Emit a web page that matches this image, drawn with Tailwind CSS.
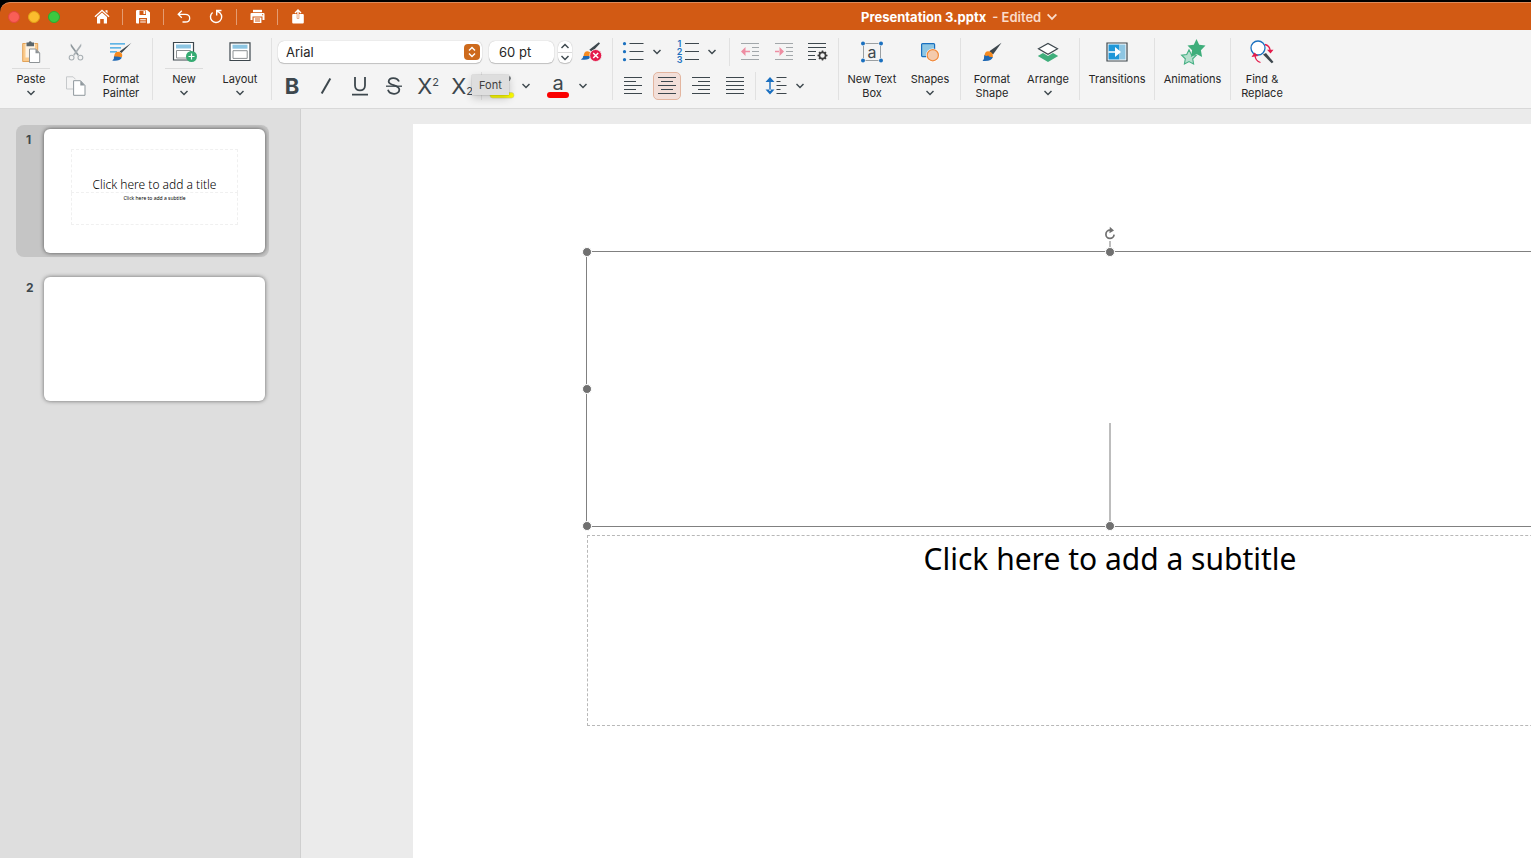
<!DOCTYPE html>
<html lang="en">
<head>
<meta charset="utf-8">
<title>Presentation 3.pptx</title>
<script src="https://cdn.jsdelivr.net/npm/@tailwindcss/browser@4"></script>
</head>
<body class="h-screen overflow-hidden bg-black pt-[2px] flex flex-col font-['Inter','Liberation_Sans',sans-serif] text-[11px] leading-[14px] text-[#262626]">

<svg class="hidden">
  <symbol id="chev" viewBox="0 0 8 6"><path d="M.5 .9l3.500 3.600L7.500.9" fill="none" stroke="currentColor" stroke-width="1.4"/></symbol>
</svg>

<header class="flex items-center h-7 shrink-0 bg-[#d25a14] border-t border-[#e08a58] rounded-tl-[10px] text-white">
  <div class="flex gap-2 pl-2 w-[92px]">
    <button aria-label="Close" class="size-3 rounded-full bg-[#f95f57] border border-[#e2463f]"></button>
    <button aria-label="Minimize" class="size-3 rounded-full bg-[#fbbc2e] border border-[#e1a116]"></button>
    <button aria-label="Zoom" class="size-3 rounded-full bg-[#3cc840] border border-[#2aab2e]"></button>
  </div>
  <nav class="flex items-center gap-[10px]">
    <button aria-label="Home" class="w-5"><svg class="mx-auto" width="16" height="15" viewBox="0 0 16 15"><path d="M8 .5l7.5 6.8-.9.9L8 2.3 1.400 8.200.5 7.300z" fill="#fff"/><path d="M11.500 1.200h2v3l-2-1.800zM8 3.500l5 4.500v6.500H9.800V10H6.200v4.500H3V8z" fill="#fff"/></svg></button>
    <span class="w-px h-4 bg-white/40"></span>
    <button aria-label="Save" class="w-5"><svg class="mx-auto" width="14" height="14" viewBox="0 0 14 14"><path fill-rule="evenodd" fill="#fff" d="M1.500 0H11l3 2.500v10q0 1-1 1H1q-1 0-1-1V1Q0 0 1.500 0zM3.500.5v4.500h6.500V.5zM3 8v5.500h8V8z"/><path d="M7.500 1h1.800v3H7.500zM4.200 9.200h5.600v1H4.200zM4.200 11.400h5.600v1H4.200z" fill="#fff"/></svg></button>
    <span class="w-px h-4 bg-white/40"></span>
    <button aria-label="Undo" class="w-5"><svg class="mx-auto" width="14" height="13" viewBox="0 0 14 13" fill="none" stroke="#fff" stroke-width="1.300"><path d="M4.800.8L1.200 4.300l3.600 3.500M1.500 4.300h6.700c6 0 6 7.700 0 7.700H5.500"/></svg></button>
    <button aria-label="Redo" class="w-5 ml-[2px]"><svg class="mx-auto" width="14" height="15" viewBox="0 0 14 15" fill="none" stroke="#fff" stroke-width="1.400"><path d="M3.600 3.500a5.600 5.600 0 1 0 7.400.4L8 2M7.700 6.500V1.500h4.800"/></svg></button>
    <span class="w-px h-4 bg-white/40"></span>
    <button aria-label="Print" class="w-5"><svg class="mx-auto" width="15" height="15" viewBox="0 0 15 15"><path d="M3 .8h9v2.400H3z" fill="#fff"/><path fill-rule="evenodd" d="M1.500 4h12q1 0 1 1v6h-2V7.500h-10V11h-2V5q0-1 1-1zm10.500 1.200v1h1.200v-1z" fill="#fff"/><path d="M3.600 8.500h7.800v5.500H3.600z" fill="#fff"/><path d="M5 10h5M5 12h5" stroke="#d25a14"/></svg></button>
    <span class="w-px h-4 bg-white/40"></span>
    <button aria-label="Share" class="w-5"><svg class="mx-auto" width="12" height="15" viewBox="0 0 12 15"><path d="M1.200 5h3.600v4.500h2.400V5h3.600q1 0 1 1v7.500q0 1-1 1H1.200q-1 0-1-1V6q0-1 1-1z" fill="#fff"/><path d="M6 9V1.500M3 4L6 1l3 3" fill="none" stroke="#fff" stroke-width="1.400"/></svg></button>
  </nav>
  <h1 class="ml-[553px] flex items-center gap-[6px] text-[13px] leading-4 font-bold whitespace-nowrap">Presentation 3.pptx <span class="font-semibold text-[#fbdccb]">- Edited</span><svg class="text-[#fbdccb]" width="10" height="8"><use href="#chev"/></svg></h1>
</header>

<div role="toolbar" class="flex h-[79px] shrink-0 py-2 bg-[#f4f4f4] border-b border-[#d8d8d8] text-center">
  <section class="flex w-[152px] pl-[3px]">
    <button class="w-14 flex flex-col items-center">
      <span class="h-7 flex items-center justify-center"><svg width="20" height="24" viewBox="0 0 20 24"><path d="M1.700 3.500h15v18h-15z" fill="#fbcb8c" stroke="#e2a35a"/><path d="M4.500 3.500h9.400v14H4.500z" fill="#fdf3e4"/><path d="M5.500 2.500h2q1.700-2.600 3.400 0h2.100v3.700H5.500z" fill="#5b666c"/><path d="M8.500 9h6.200l4 4v9.500H8.500z" fill="#fff" stroke="#8d9295"/><path d="M14.500 9v4.200h4.200z" fill="#8d9295"/></svg></span>
      <span class="w-[38px] border-t border-[#dcdcdc] mt-[2px] pt-[3px]">Paste</span>
      <svg class="mt-[4px] text-[#3d474d]" width="8" height="6"><use href="#chev"/></svg>
    </button>
    <div class="w-[34px] flex flex-col gap-[6px] items-center">
      <button aria-label="Cut" class="h-7"><svg width="16" height="18" viewBox="0 0 16 18"><path d="M2.800.5q-.6 2 .8 4l6 8.300 1.200-1.400z" fill="#8e979c"/><path d="M13.200.5q.6 2-.8 4l-6 8.300-1.200-1.400z" fill="#a9b0b4"/><circle cx="3.600" cy="14.600" r="2.400" fill="none" stroke="#a9b0b4" stroke-width="1.100"/><circle cx="12.400" cy="14.600" r="2.400" fill="none" stroke="#a9b0b4" stroke-width="1.100"/></svg></button>
      <button aria-label="Copy" class="h-7"><svg width="20" height="20" viewBox="0 0 20 20"><path d="M.5.8h6.600l2.400 2.500M7 13H.5V.8" fill="none" stroke="#c6c9cb"/><path d="M7.600 4.700h6.900l4.500 4.800v9.800H7.600z" fill="#fff" stroke="#8f989d"/><path d="M14.300 4.700v4.900H19z" fill="#8f989d"/></svg></button>
    </div>
    <button class="w-14 flex flex-col items-center gap-[6px]">
      <span class="h-7 flex items-center"><svg width="24" height="20" viewBox="0 0 24 20"><path d="M1 1.900h15M1 5.900h11M1 9.900h7" stroke="#2f9fe0" stroke-width="1.200"/><path d="M22.500.8L12.500 11l-2-1.500z" fill="#3d474d"/><path d="M5 15q.5-6 5.500-5 3.500 1 2.500 5z" fill="#f68a1f"/><path d="M3.200 18.500Q5.500 17 5 14.500q4-.5 8 1-2.500 4-9.800 3z" fill="#1f68b3"/></svg></span>
      <span>Format<br>Painter</span>
    </button>
  </section>
  <section class="flex w-[119px] border-l border-[#e1e1e1] pl-[3px]">
    <button class="w-14 flex flex-col items-center">
      <span class="h-7 flex items-center"><svg class="ml-[2px]" width="26" height="22" viewBox="0 0 26 22"><path d="M1.500 1.500h20v17.500h-20z" fill="#fff" stroke="#3d474d" stroke-width="1.200"/><path d="M4 3.500h15v4H4z" fill="#8cc5e2"/><path d="M4.500 9.500h14v7.500h-14z" fill="none" stroke="#8c9193"/><circle cx="19.500" cy="15.500" r="5.500" fill="#35ab72"/><path d="M19.500 12.500v6M16.500 15.500h6" stroke="#fff" stroke-width="1.200"/></svg></span>
      <span class="w-[38px] border-t border-[#dcdcdc] mt-[2px] pt-[3px]">New</span>
      <svg class="mt-[4px] text-[#3d474d]" width="8" height="6"><use href="#chev"/></svg>
    </button>
    <button class="w-14 flex flex-col items-center">
      <span class="h-7 flex items-center"><svg width="22" height="20" viewBox="0 0 22 20"><path d="M1 .9h20v17.600H1z" fill="#fff" stroke="#3d474d" stroke-width="1.200"/><path d="M3.500 2.700h15v4h-15z" fill="#8cc5e2"/><path d="M4 8.700h14.200v7.700H4z" fill="none" stroke="#8c9193"/></svg></span>
      <span class="mt-[6px]">Layout</span>
      <svg class="mt-[4px] text-[#3d474d]" width="8" height="6"><use href="#chev"/></svg>
    </button>
  </section>
  <section class="relative w-[341px] border-l border-[#e1e1e1] flex flex-col gap-[6px] text-[#3d474d]">
    <div class="h-7 flex items-center pl-[6px]">
      <div class="relative w-[204px]">
        <select aria-label="Font" class="appearance-none w-full h-[22px] rounded-md bg-white pl-2 text-[13px] text-[#262626] shadow-[0_0_1px_#00000050,0_1px_1px_#00000030]"><option>Arial</option></select>
        <span class="absolute right-[2px] top-[3px] size-4 rounded bg-[#cd6a1c] flex items-center justify-center pointer-events-none"><svg width="8" height="12" viewBox="0 0 8 12" fill="none" stroke="#fff" stroke-width="1.400"><path d="M1 4.500L4 1.500l3 3M1 7.500l3 3 3-3"/></svg></span>
      </div>
      <input aria-label="Font size" value="60 pt" class="ml-[7px] w-[65px] h-[22px] rounded-md bg-white pl-[10px] text-[13px] text-[#262626] shadow-[0_0_1px_#00000050,0_1px_1px_#00000030]">
      <div class="ml-1 w-[14px] h-[22px] rounded-md bg-white flex flex-col divide-y divide-[#dadada] shadow-[0_0_1px_#00000050,0_1px_1px_#00000030]">
        <button aria-label="Increase size" class="flex-1 flex items-center justify-center"><svg class="rotate-180" width="8" height="6"><use href="#chev"/></svg></button>
        <button aria-label="Decrease size" class="flex-1 flex items-center justify-center"><svg width="8" height="6"><use href="#chev"/></svg></button>
      </div>
      <button aria-label="Clear formatting" class="ml-2"><svg width="22" height="20" viewBox="0 0 22 20"><path d="M18.800.3L20 1.500 12 10 9.300 7.800z" fill="#3d474d"/><path d="M3.500 14.500q.5-6 5-5 3.500 1 2.500 5z" fill="#f68a1f"/><path d="M.8 17.500q2.500-1 2.500-3.500h7.500q-1.500 5-10 3.500z" fill="#1f68b3"/><circle cx="15.700" cy="13.500" r="6" fill="#e41b4b" stroke="#f4f4f4" stroke-width=".8"/><path d="M13.200 11l5 5M18.200 11l-5 5" stroke="#fff" stroke-width="1.500"/></svg></button>
    </div>
    <div class="h-7 flex items-center pl-[3px] text-[22px] leading-7">
      <button aria-label="Bold" class="w-[34px] font-bold">B</button>
      <button aria-label="Italic" class="w-[34px]"><svg class="mx-auto" width="12" height="18" viewBox="0 0 12 18"><path d="M10.300 1.500L1.700 16.500" stroke="currentColor" stroke-width="2"/></svg></button>
      <button aria-label="Underline" class="w-[34px]"><svg class="mx-auto" width="18" height="20" viewBox="0 0 18 20" fill="none" stroke="currentColor" stroke-width="1.800"><path d="M4 1v8.500c0 6.600 10 6.600 10 0V1M1 18.700h16"/></svg></button>
      <button aria-label="Strikethrough" class="w-[34px]"><svg class="mx-auto" width="18" height="18" viewBox="0 0 18 18" fill="none" stroke="currentColor" stroke-width="1.800"><path d="M14 4.500C12-.3 3.500 0 3.700 4.800 3.900 8.500 14 8 14.300 12.500 14.500 18 4.500 18.300 3 12.800"/><path d="M1 9.200h16" stroke-width="1.300"/></svg></button>
      <button aria-label="Superscript" class="w-[34px] flex justify-center items-start">X<sup class="top-0 mt-[3px] text-[11px] leading-[14px]">2</sup></button>
      <button aria-label="Subscript" class="w-[34px] flex justify-center items-start">X<sub class="bottom-0 mt-[12px] text-[11px] leading-[14px]">2</sub></button>
      <span class="w-px h-7 bg-[#e1e1e1] ml-[2px]"></span>
      <button aria-label="Highlight" class="ml-[2px] w-[34px]"><svg class="mx-auto" width="28" height="26" viewBox="0 0 28 26"><path d="M12 14L20 4q4-2 4 1.500l-1 2-5 4-5 4z" fill="#7d8285"/><rect x="3" y="19.500" width="24" height="5.500" rx="2.700" fill="#fdfd00" stroke="#c9c98a" stroke-width=".6"/></svg></button>
      <button aria-label="Highlight colours" class="w-4"><svg class="mx-auto" width="8" height="6"><use href="#chev"/></svg></button>
      <button aria-label="Font colour" class="ml-[7px] w-[34px] flex flex-col items-center text-[20px] leading-[18px]">a<span class="w-[22px] h-[6px] rounded-full bg-[#fa0000]"></span></button>
      <button aria-label="Font colours" class="w-4"><svg class="mx-auto" width="8" height="6"><use href="#chev"/></svg></button>
    </div>
    <span role="tooltip" class="absolute left-[200px] top-[37px] px-[7px] py-[3px] bg-[#dedede] text-[11px] leading-[14px] text-[#3f3f3f] shadow-[0_0_1px_#0006,0_3px_8px_#0003]">Font</span>
  </section>
  <section class="w-[226px] border-l border-[#e1e1e1] flex flex-col gap-[6px] pl-[6px] text-[#3d474d]">
    <div class="h-7 flex items-center">
      <button aria-label="Bullets" class="w-7"><svg class="mx-auto" width="22" height="20" viewBox="0 0 22 20"><g fill="#1a70bf"><circle cx="2.500" cy="1.700" r="1.600"/><circle cx="2.500" cy="9.700" r="1.600"/><circle cx="2.500" cy="17.700" r="1.600"/></g><path d="M7.500 1.500h14M7.500 9.500h14M7.500 17.500h14" stroke="currentColor"/></svg></button>
      <button aria-label="Bullet styles" class="ml-[2px] w-4"><svg class="mx-auto" width="8" height="6"><use href="#chev"/></svg></button>
      <button aria-label="Numbering" class="ml-[9px] w-7 flex items-center justify-center gap-[3px]"><span class="text-[9px] leading-[8px] font-semibold text-[#1a70bf]">1<br>2<br>3</span><svg width="14" height="18" viewBox="0 0 14 18"><path d="M0 .5h14M0 8.500h14M0 16.500h14" stroke="currentColor"/></svg></button>
      <button aria-label="Number styles" class="ml-[2px] w-4"><svg class="mx-auto" width="8" height="6"><use href="#chev"/></svg></button>
      <span class="w-px h-7 bg-[#e1e1e1] ml-[9px]"></span>
      <button aria-label="Decrease indent" class="ml-[6px] w-7"><svg class="mx-auto" width="20" height="18" viewBox="0 0 20 18"><path d="M1 .5h18M12 4.500h7M12 8.500h7M12 12.500h7M1 16.500h18" stroke="#a2a7aa"/><path d="M1 8.500L5.500 4v9zM5 7.800h5v1.400H5z" fill="#ee8da2"/></svg></button>
      <button aria-label="Increase indent" class="ml-[6px] w-7"><svg class="mx-auto" width="20" height="18" viewBox="0 0 20 18"><path d="M1 .5h18M12 4.500h7M12 8.500h7M12 12.500h7M1 16.500h18" stroke="#a2a7aa"/><path d="M10 8.500L5.500 4v9zM1 7.800h5v1.400H1z" fill="#ee8da2"/></svg></button>
      <button aria-label="Paragraph settings" class="ml-[6px] w-7"><svg class="mx-auto" width="22" height="20" viewBox="0 0 22 20"><path d="M1 1.500h18M1 5.500h18M1 9.500h8M1 13.500h7M1 17.500h8" stroke="currentColor"/><circle cx="15.500" cy="13.500" r="3.100" fill="none" stroke="#3d3d3d" stroke-width="1.700"/><path d="M15.500 8.500v2M15.500 16.500v2M10.500 13.500h2M18.500 13.500h2M12 10l1.400 1.400M17.600 15.600l1.400 1.400M12 17l1.400-1.400M17.600 11.400l1.400-1.400" stroke="#3d3d3d" stroke-width="1.500"/></svg></button>
    </div>
    <div class="h-7 flex items-center gap-[6px]">
      <button aria-label="Align left" class="w-7 h-7"><svg class="mx-auto" width="18" height="18" viewBox="0 0 18 18"><path d="M0 .5h18M0 4.500h12M0 8.500h18M0 12.500h12M0 16.500h18" stroke="currentColor"/></svg></button>
      <button aria-label="Align centre" aria-pressed="true" class="w-7 h-7 rounded-[5px] bg-[#f2dfd9] border border-[#e3b59f]"><svg class="mx-auto" width="18" height="18" viewBox="0 0 18 18"><path d="M0 .5h18M3 4.500h12M0 8.500h18M3 12.500h12M0 16.500h18" stroke="currentColor"/></svg></button>
      <button aria-label="Align right" class="w-7 h-7"><svg class="mx-auto" width="18" height="18" viewBox="0 0 18 18"><path d="M0 .5h18M6 4.500h12M0 8.500h18M6 12.500h12M0 16.500h18" stroke="currentColor"/></svg></button>
      <button aria-label="Justify" class="w-7 h-7"><svg class="mx-auto" width="18" height="18" viewBox="0 0 18 18"><path d="M0 .5h18M0 4.500h18M0 8.500h18M0 12.500h18M0 16.500h18" stroke="currentColor"/></svg></button>
      <span class="w-px h-7 bg-[#e1e1e1]"></span>
      <button aria-label="Line spacing" class="w-7 h-7"><svg class="mx-auto" width="22" height="18" viewBox="0 0 22 18"><path d="M5 0l4.500 5h-9zM5 17.500l4.500-5h-9zM4.300 4h1.400v10H4.300z" fill="#1a6fc0"/><path d="M11.500 .5h10M11.500 4.500h4M11.500 8.500h10M11.500 12.500h4M11.500 16.500h10" stroke="currentColor"/></svg></button>
      <button aria-label="Line spacing options" class="w-2"><svg width="8" height="6"><use href="#chev"/></svg></button>
    </div>
  </section>
  <section class="flex w-[122px] border-l border-[#e1e1e1] pl-[3px]">
    <button class="w-[60px] flex flex-col items-center gap-[6px]">
      <span class="h-7 flex items-center"><span class="relative flex items-center justify-center w-6 h-[22px] text-[16px] leading-4 text-[#3d474d]"><svg class="absolute inset-0" width="24" height="22" viewBox="0 0 24 22"><path d="M5.500 2.500h13M5.500 19.500h13M3.500 5v12M20.500 5v12" stroke="#9a9fa2"/><g fill="#1a70bf"><circle cx="3" cy="2.500" r="2"/><circle cx="21" cy="2.500" r="2"/><circle cx="3" cy="19.500" r="2"/><circle cx="21" cy="19.500" r="2"/></g></svg>a</span></span>
      <span>New Text<br>Box</span>
    </button>
    <button class="w-14 flex flex-col items-center">
      <span class="h-7 flex items-center"><svg width="20" height="20" viewBox="0 0 20 20"><rect x="1.600" y="1.600" width="13" height="13" rx="1" fill="#8ec6e3" stroke="#1a70bf" stroke-width="1.200"/><circle cx="12.800" cy="13.200" r="6.800" fill="#fff"/><circle cx="12.800" cy="13.200" r="5.600" fill="#f4caac" stroke="#f0893a" stroke-width="1.200"/></svg></span>
      <span class="mt-[6px]">Shapes</span>
      <svg class="mt-[4px] text-[#3d474d]" width="8" height="6"><use href="#chev"/></svg>
    </button>
  </section>
  <section class="flex w-[119px] border-l border-[#e1e1e1] pl-[3px]">
    <button class="w-14 flex flex-col items-center gap-[6px]">
      <span class="h-7 flex items-center"><svg width="20" height="20" viewBox="0 0 20 20"><path d="M19.500.7L11 12.500 7.300 9.300z" fill="#3d474d"/><path d="M2.300 14.500q.5-6 5-5 4.200 1.200 3.500 6z" fill="#f68a1f"/><path d="M.5 19Q2.500 17 2.300 13q2 1.500 4 .5 1 2 4.500 1.500-1 4.800-10.300 4z" fill="#1f68b3"/></svg></span>
      <span>Format<br>Shape</span>
    </button>
    <button class="w-14 flex flex-col items-center">
      <span class="h-7 flex items-center"><svg width="22" height="20" viewBox="0 0 22 20"><path d="M.8 14L6 11l5 3 5-3 5.200 3L11 20z" fill="#3fae7b"/><path d="M1.500 6.800L11 1.500l9.500 5.300L11 12.200z" fill="#fff" stroke="#3d474d" stroke-width="1.200"/></svg></span>
      <span class="mt-[6px]">Arrange</span>
      <svg class="mt-[4px] text-[#3d474d]" width="8" height="6"><use href="#chev"/></svg>
    </button>
  </section>
  <section class="flex w-[75px] border-l border-[#e1e1e1]">
    <button class="w-full flex flex-col items-center gap-[6px]">
      <span class="h-7 flex items-center"><svg width="22" height="20" viewBox="0 0 22 20"><path d="M1 1h20v18H1z" fill="#fff" stroke="#3d474d" stroke-width="1.200"/><path d="M2.500 2.500h11v15h-11z" fill="#1f97d8"/><path d="M13.500 2.500h6v15h-6z" fill="#8ec6e3"/><path d="M2.500 9.300H9V5l6 5-6 5v-4.300H2.500z" fill="#fff"/></svg></span>
      <span>Transitions</span>
    </button>
  </section>
  <section class="flex w-[76px] border-l border-[#e1e1e1]">
    <button class="w-full flex flex-col items-center gap-[6px]">
      <span class="h-7 flex items-center"><svg width="26" height="26" viewBox="0 0 26 26"><path d="M9 10.800l2.300 4.700 5.100.7-3.700 3.600.9 5.100L9 22.500l-4.600 2.400.9-5.100-3.700-3.600 5.100-.7z" fill="#b5dfcd" stroke="#45b083" stroke-width="1.100"/><path d="M16.500 0l2.700 5.700 6.300.8-4.600 4.700 1.200 6.800-5.600-3-5.600 3 1.200-6.800L7.500 6.500l6.300-.8z" fill="#3fae7b"/></svg></span>
      <span>Animations</span>
    </button>
  </section>
  <section class="flex border-l border-[#e1e1e1] pl-[3px]">
    <button class="w-14 flex flex-col items-center gap-[6px]">
      <span class="h-7 flex items-center"><svg width="26" height="24" viewBox="0 0 26 24"><circle cx="9" cy="8" r="7" fill="#fff" stroke="#1a70bf" stroke-width="1.300"/><path d="M14 14.500l3-1.500 7.500 9-1.800 1.200z" fill="#3d474d"/><path d="M16 4.500q4.500 1 5.200 6M11.500 22.500q-5-1.500-5.500-7" fill="none" stroke="#e41b4b" stroke-width="1.300"/><path d="M18 9.700h6.500L21.500 13.500zM2.500 17L5.500 12.500 9.500 16z" fill="#e41b4b"/></svg></span>
      <span>Find &amp;<br>Replace</span>
    </button>
  </section>
</div>

<div class="flex flex-1 min-h-0">
  <aside class="w-[301px] shrink-0 bg-[#dedede] border-r border-[#cfcfcf] pt-4 pl-4">
    <ol class="flex flex-col gap-4 text-[12px] font-bold text-[#3d474d]">
      <li class="flex w-[253px] p-1 rounded-lg bg-[#c5c5c5]">
        <span class="w-6 pl-[6px] pt-1">1</span>
        <div class="w-[221px] h-[124px] rounded-md bg-white shadow-[0_0_4px_#0009] px-[27px] pt-5 font-normal text-black text-center font-['Noto_Sans','Open_Sans',sans-serif]">
          <div class="h-11 border border-dashed border-[#f0f0f0] flex items-end justify-center text-[12px] leading-[14px] font-light whitespace-nowrap">Click here to add a title</div>
          <div class="h-8 border border-t-0 border-dashed border-[#f0f0f0] text-[5px] leading-[10px]">Click here to add a subtitle</div>
        </div>
      </li>
      <li class="flex w-[253px] p-1 rounded-lg">
        <span class="w-6 pl-[6px] pt-1">2</span>
        <div class="w-[221px] h-[124px] rounded-md bg-white shadow-[0_0_4px_#0008]"></div>
      </li>
    </ol>
  </aside>
  <main class="flex-1 min-w-0 overflow-hidden bg-[#ebebeb] pt-[15px] pl-28">
    <article class="relative w-[1394px] h-[784px] bg-white font-['Noto_Sans','Open_Sans',sans-serif] text-black">
      <div class="absolute left-[173px] top-[127px] w-[1048px] h-[276px] border border-[#808080]">
        <svg class="absolute left-[517px] -top-[26px]" width="12" height="14" viewBox="0 0 12 14"><path d="M6 4.200A4.100 4.100 0 1 0 10.100 8.600" fill="none" stroke="#707070" stroke-width="1.700"/><path d="M5.800.8l4.200 3.800-4.600 2.600z" fill="#707070"/></svg>
        <span class="absolute left-[522px] -top-[11px] w-[2px] h-[7px] bg-[#bdbdbd]"></span>
        <span class="absolute left-[522px] top-[171px] w-[2px] h-[101px] bg-[#bdbdbd]"></span>
        <span class="absolute -left-[5px] -top-[5px] size-[10px] rounded-full bg-[#707070] border border-white"></span>
        <span class="absolute left-[518px] -top-[5px] size-[10px] rounded-full bg-[#707070] border border-white"></span>
        <span class="absolute -left-[5px] top-[132px] size-[10px] rounded-full bg-[#707070] border border-white"></span>
        <span class="absolute -left-[5px] top-[269px] size-[10px] rounded-full bg-[#707070] border border-white"></span>
        <span class="absolute left-[518px] top-[269px] size-[10px] rounded-full bg-[#707070] border border-white"></span>
      </div>
      <div class="absolute left-[174px] top-[411px] w-[1046px] h-[191px] border border-dashed border-[#b8b8b8] text-center text-[30px] leading-[46px]">Click here to add a subtitle</div>
    </article>
  </main>
</div>
</body>
</html>
